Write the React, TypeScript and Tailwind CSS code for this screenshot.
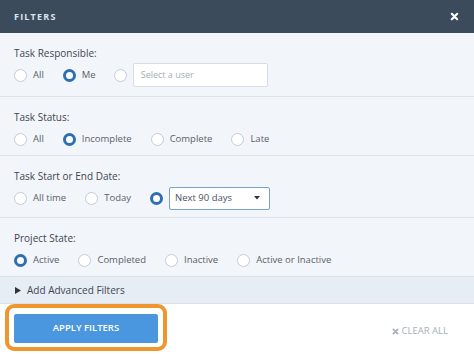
import { FC } from 'react';

type Opt = { label: string; checked?: boolean };

const Radio: FC<{ checked?: boolean }> = ({ checked }) => (
  <span
    className={
      checked
        ? 'w-[13px] h-[13px] rounded-full border-[3.5px] border-[#2e6fb3] bg-white shrink-0'
        : 'w-[13px] h-[13px] rounded-full border border-[#c4ccd5] bg-white shrink-0'
    }
  />
);

const RadioRow: FC<{ options: Opt[]; children?: React.ReactNode }> = ({ options, children }) => (
  <div className="flex items-center gap-[19px] h-[24px]">
    {options.map((o) => (
      <label key={o.label} className="flex items-center gap-[6px] text-[9.5px] text-[#5a616b]">
        <Radio checked={o.checked} />
        {o.label}
      </label>
    ))}
    {children}
  </div>
);

const Section: FC<{ title: string; children: React.ReactNode; h: string }> = ({ title, children, h }) => (
  <div className={`${h} px-[14px] pt-[13px] border-b border-[#dde3ea] bg-[#f2f5f9]`}>
    <div className="text-[10px] font-medium text-[#3f4652] mb-[2px] leading-[15px]">{title}</div>
    {children}
  </div>
);

export default function App() {
  return (
    <div className="w-[474px] h-[354px] bg-white overflow-hidden" style={{ fontFamily: '"Open Sans", sans-serif' }}>
      <div className="h-[33px] bg-[#3c4b5c] flex items-center justify-between px-[14px]">
        <span className="text-[9px] font-bold tracking-[1.2px] text-[#dde4ec]">FILTERS</span>
        <svg width="9" height="9" viewBox="0 0 10 10" className="mr-[1px]">
          <path d="M2 2 L8 8 M8 2 L2 8" stroke="#ffffff" strokeWidth="2.4" strokeLinecap="round" />
        </svg>
      </div>
      <Section title="Task Responsible:" h="h-[64px]">
        <RadioRow options={[{ label: 'All' }, { label: 'Me', checked: true }]}>
          <div className="flex items-center gap-[6px] -ml-[1px]">
            <Radio />
            <div className="w-[135px] h-[24px] bg-white border border-[#d7dde4] rounded-[2px] flex items-center px-[7px] text-[9px] text-[#a6adb5]">
              Select a user
            </div>
          </div>
        </RadioRow>
      </Section>
      <Section title="Task Status:" h="h-[59px]">
        <RadioRow
          options={[
            { label: 'All' },
            { label: 'Incomplete', checked: true },
            { label: 'Complete' },
            { label: 'Late' },
          ]}
        />
      </Section>
      <Section title="Task Start or End Date:" h="h-[62px]">
        <RadioRow options={[{ label: 'All time' }, { label: 'Today' }]}>
          <div className="flex items-center gap-[6px]">
            <Radio checked />
            <div className="w-[101px] h-[23px] bg-white border border-[#7aa3cc] rounded-[2px] flex items-center justify-between px-[5px] text-[9.5px] text-[#4a5260]">
              Next 90 days
              <svg width="6" height="4" viewBox="0 0 6 4" className="mr-[4px]">
                <path d="M0 0 L6 0 L3 3.5 Z" fill="#333" />
              </svg>
            </div>
          </div>
        </RadioRow>
      </Section>
      <Section title="Project State:" h="h-[59px]">
        <RadioRow
          options={[
            { label: 'Active', checked: true },
            { label: 'Completed' },
            { label: 'Inactive' },
            { label: 'Active or Inactive' },
          ]}
        />
      </Section>
      <div className="h-[27px] bg-[#e7edf4] border-b border-[#dde3ea] flex items-center gap-[6px] px-[15px] text-[10px] font-medium text-[#3e4652]">
        <svg width="6" height="7" viewBox="0 0 6 7">
          <path d="M0 0 L6 3.5 L0 7 Z" fill="#333" />
        </svg>
        Add Advanced Filters
      </div>
      <div className="flex items-center justify-between pl-[5px] pr-[26px]">
        <div className="border-[4px] border-[#f0962e] rounded-[9px] p-[5px] w-[162px] h-[47px]">
          <button className="w-full h-full bg-[#4a97df] rounded-[2px] text-white text-[9.5px] font-semibold">
            APPLY FILTERS
          </button>
        </div>
        <span className="flex items-center gap-[3px] text-[9.5px] text-[#a9b0b8] mt-[8px]">
          <svg width="7" height="7" viewBox="0 0 10 10">
            <path d="M2 2 L8 8 M8 2 L2 8" stroke="#a9b0b8" strokeWidth="2.6" strokeLinecap="round" />
          </svg>
          CLEAR ALL
        </span>
      </div>
    </div>
  );
}
